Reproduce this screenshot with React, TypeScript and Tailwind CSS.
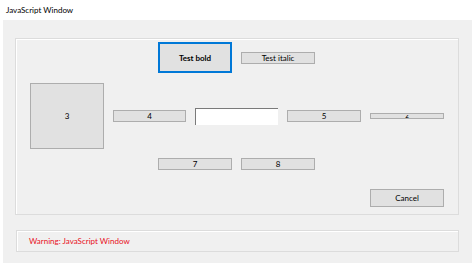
import React from "react"

const base = "flex items-center justify-center shrink-0 bg-[#e1e1e1] text-black overflow-hidden leading-[12px]"
const btn = `${base} border border-[#adadad]`

export default function App() {
  return (
    <div className="w-[474px] h-[266px] bg-white font-['Lato',sans-serif] text-[8px] text-black overflow-hidden">
      <div className="h-[20px] pl-[6px] pt-[4px] leading-[12px]">JavaScript Window</div>

      <div className="ml-[3px] w-[469px] h-[243px] bg-[#f0f0f0] pt-[18px] pl-[12px]">
        {/* main group */}
        <div className="w-[444px] h-[177px] border border-[#dcdcdc] shadow-[inset_1px_1px_0_#fff]">
          <div className="flex items-center pt-[3px] pl-[142px]">
            <div className={`${base} w-[74px] h-[31px] border-2 border-[#0078d7] font-bold`}>Test bold</div>
            <div className={`${btn} ml-[9px] w-[74px] h-[12px]`}>Test italic</div>
          </div>

          <div className="flex items-center mt-[10px] pl-[14px]">
            <div className={`${btn} w-[74px] h-[66px]`}>3</div>
            <div className={`${btn} ml-[9px] w-[73px] h-[12px]`}>4</div>
            <input
              className="ml-[9px] w-[83px] h-[17px] bg-white border-t border-l border-[#7a7a7a] outline-none"
              defaultValue=""
            />
            <div className={`${btn} ml-[9px] w-[74px] h-[12px]`}>5</div>
            <div className={`${btn} ml-[9px] w-[74px] h-[6px] items-start`}>
              <span className="mt-[0px] leading-[8px]">6</span>
            </div>
          </div>

          <div className="flex items-center mt-[9px] pl-[142px]">
            <div className={`${btn} w-[74px] h-[12px]`}>7</div>
            <div className={`${btn} ml-[9px] w-[74px] h-[12px]`}>8</div>
          </div>

          <div className="flex mt-[19px] pl-[354px]">
            <div className={`${btn} w-[74px] h-[18px]`}>Cancel</div>
          </div>
        </div>

        {/* status group */}
        <div className="mt-[15px] ml-[1px] w-[443px] h-[22px] border border-[#dcdcdc] shadow-[inset_1px_1px_0_#fff] flex items-center pl-[12px] text-[#e81123] leading-[12px]">
          Warning: JavaScript Window
        </div>
      </div>
    </div>
  )
}
